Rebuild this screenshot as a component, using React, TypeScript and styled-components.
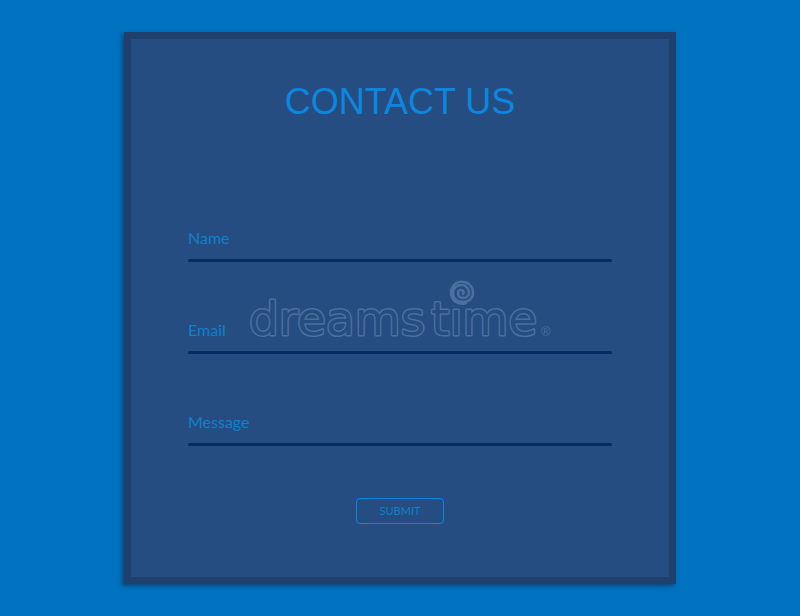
import React from "react";
import styled, { createGlobalStyle } from "styled-components";

const colors = {
  page: "#0072bf",
  panel: "#254d81",
  frame: "#1f406c",
  accent: "#0c86de",
  label: "#1080cd",
  line: "#042c65",
  mark: "#4b709d",
};

const GlobalStyle = createGlobalStyle`
  * {
    box-sizing: border-box;
  }

  body {
    margin: 0;
    background: ${colors.page};
    font-family: Lato, "Open Sans", sans-serif;
  }
`;

const Page = styled.main`
  min-height: 100vh;
  display: flex;
  justify-content: center;
  align-items: center;
  padding: 32px;
`;

const Panel = styled.form`
  position: relative;
  width: 100%;
  max-width: 552px;
  display: flex;
  flex-direction: column;
  align-items: center;
  padding: 43px 57px 53px;
  border: 7px solid ${colors.frame};
  background: ${colors.panel};
  box-shadow: -2px 2px 4px rgba(20, 50, 90, 0.7);
`;

const Title = styled.h1`
  margin: 0 0 104px;
  color: ${colors.accent};
  font: 400 36px/40px "Liberation Sans", Arial, sans-serif;
  text-align: center;
`;

const Fields = styled.div`
  width: 100%;
  display: flex;
  flex-direction: column;
  gap: 56px;
  margin-bottom: 52px;
`;

const Field = styled.div`
  display: flex;
  flex-direction: column;
  gap: 9px;
`;

const Entry = styled.div`
  display: flex;
  gap: 12px;
  height: 24px;
`;

const Label = styled.label`
  color: ${colors.label};
  font-size: 16px;
  line-height: 24px;
`;

const Input = styled.input`
  flex: 1;
  min-width: 0;
  padding: 0;
  border: 0;
  outline: 0;
  background: transparent;
  color: ${colors.accent};
  font: inherit;
`;

const Rule = styled.div`
  height: 3px;
  border-radius: 2px;
  background: ${colors.line};
`;

const Submit = styled.button`
  width: 88px;
  height: 26px;
  padding: 0;
  border: 1px solid ${colors.accent};
  border-radius: 4px;
  background: transparent;
  color: ${colors.label};
  font: 400 11px/24px Lato, sans-serif;
  cursor: pointer;
`;

const Watermark = styled.div`
  position: absolute;
  inset: 0;
  display: grid;
  place-items: center;
  pointer-events: none;
`;

const Mark = styled.svg`
  overflow: visible;
`;

const MarkText = styled.text`
  fill: ${colors.panel};
  stroke: ${colors.mark};
  stroke-width: 3px;
  stroke-linejoin: round;
  paint-order: stroke fill;
  font: 400 47px "DejaVu Sans", sans-serif;
`;

const Registered = styled.text`
  fill: ${colors.mark};
  font: 400 13px "Liberation Sans", sans-serif;
`;

const fields = [
  { id: "name", label: "Name", type: "text" },
  { id: "email", label: "Email", type: "email" },
  { id: "message", label: "Message", type: "text" },
];

export default function App() {
  return (
    <>
      <GlobalStyle />
      <Page>
        <Panel onSubmit={(event: React.FormEvent) => event.preventDefault()}>
          <Title>CONTACT US</Title>
          <Fields>
            {fields.map((field) => (
              <Field key={field.id}>
                <Entry>
                  <Label htmlFor={field.id}>{field.label}</Label>
                  <Input id={field.id} name={field.id} type={field.type} />
                </Entry>
                <Rule />
              </Field>
            ))}
          </Fields>
          <Submit type="submit">SUBMIT</Submit>
          <Watermark>
            <Mark width="304" height="58" viewBox="0 0 304 58">
              <MarkText x="1" y="56">
                dreams<tspan x="183">time</tspan>
              </MarkText>
              <circle cx="208" cy="22" r="6" fill={colors.panel} />
              <circle cx="214" cy="14" r="13" fill={colors.panel} />
              <path
                transform="translate(2 1)"
                d="M216 23A11 11 0 1 1 223 13C223 19 218 22 213 22C207 22 203 18 203 13C203 8 207 5 212 5C216 5 219 9 219 13C219 16 216 18 213 18C210 18 208 16 208 13C208 10 211 9 213 11C214 12 214 13 213 14"
                fill="none"
                stroke={colors.mark}
                strokeWidth="2.5"
                strokeLinecap="round"
              />
              <Registered x="293" y="57">®</Registered>
            </Mark>
          </Watermark>
        </Panel>
      </Page>
    </>
  );
}
